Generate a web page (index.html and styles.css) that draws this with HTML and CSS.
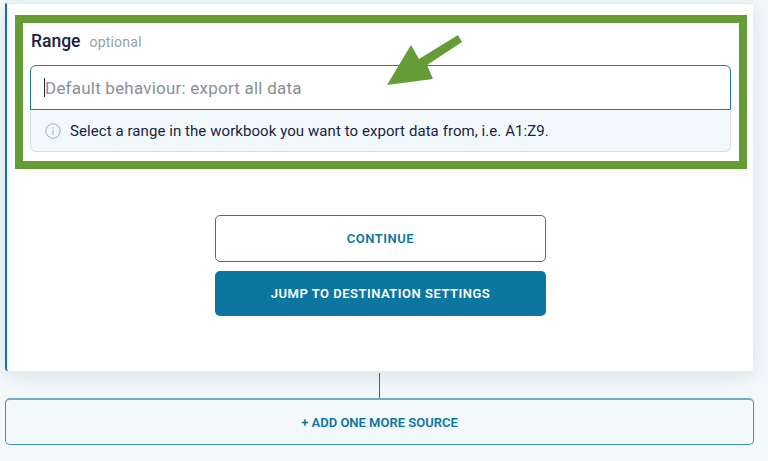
FILE: index.html
```html
<!DOCTYPE html>
<html lang="en">
<head>
	<meta charset="UTF-8">
	<title>Source settings</title>
	<link rel="stylesheet" href="styles.css">
</head>
<body>
<div class="card">
	<div class="highlight">
		<div class="label-row">
			<span class="label">Range</span>
			<span class="optional">optional</span>
		</div>
		<div class="field">
			<div class="input"><i class="caret"></i><span>Default behaviour: export all data</span></div>
			<div class="help">
				<svg class="info" viewBox="0 0 16 16" width="16" height="16">
					<circle cx="8" cy="8" r="7.2" fill="none" stroke="#9db0bc" stroke-width="1"/>
					<rect x="7.5" y="7" width="1.1" height="4.6" fill="#9db0bc"/>
					<rect x="7.5" y="4.4" width="1.1" height="1.3" fill="#9db0bc"/>
				</svg>
				<span>Select a range in the workbook you want to export data from, i.e. A1:Z9.</span>
			</div>
		</div>
		<svg class="arrow" viewBox="0 0 80 54" width="80" height="54">
			<polygon fill="#669c35" points="2,52 26,12 34,26 73,2 77,9 42,32 48,46"/>
		</svg>
	</div>
	<div class="actions">
		<a class="btn btn-outline">CONTINUE</a>
		<a class="btn btn-solid">JUMP TO DESTINATION SETTINGS</a>
	</div>
</div>
<div class="connector"></div>
<a class="add-source">+ ADD ONE MORE SOURCE</a>
</body>
</html>
```

FILE: styles.css
```css
html, body {
    height: 100%;
}

body {
    box-sizing: border-box;
    height: 461px;
    margin: 0;
    padding: 3px 15px 0 5px;
    overflow: hidden;
    font-family: "Roboto", "Liberation Sans", sans-serif;
    color: #1c2340;
    background: #f3f8fb;
}

.card {
    box-sizing: border-box;
    height: 368px;
    padding: 11px 6px 0 8px;
    border-top: 1px solid #e6eaee;
    border-left: 2px solid #0b76a0;
    border-radius: 0 0 3px 3px;
    background: #fff;
    box-shadow: 0 4px 22px rgba(60, 90, 110, .14);
}

.highlight {
    position: relative;
    box-sizing: border-box;
    height: 154px;
    padding: 8px 8px 0 7px;
    border: 8px solid #669c35;
}

.label-row {
    display: flex;
    align-items: baseline;
    gap: 9px;
    height: 34px;
    padding-left: 1px;
}

.label {
    font-size: 17.5px;
    font-weight: 500;
    line-height: 20px;
}

.optional {
    font-size: 14px;
    letter-spacing: .2px;
    color: #8fa3b0;
}

.field {
    border-radius: 6px;
    background: #f1f9fd;
    box-shadow: inset 0 0 0 1px #d2dee6;
}

.input {
    box-sizing: border-box;
    display: flex;
    align-items: center;
    height: 45px;
    padding-left: 13px;
    border: 1px solid #1f7ea6;
    border-radius: 6px 6px 0 0;
    font-size: 17px;
    letter-spacing: .22px;
    color: #8a8f94;
    background: #fff;
}

.caret {
    width: 1px;
    height: 19px;
    background: #1c2340;
}

.help {
    display: flex;
    align-items: center;
    gap: 9px;
    height: 42px;
    padding-left: 15px;
    font-size: 15px;
    letter-spacing: .07px;
}

.info {
    flex: none;
}

.arrow {
    position: absolute;
    top: 10px;
    left: 362px;
}

.actions {
    display: flex;
    flex-direction: column;
    align-items: center;
    gap: 9px;
    padding: 46px 1px 0 0;
}

.btn {
    box-sizing: border-box;
    display: flex;
    align-items: center;
    justify-content: center;
    width: 331px;
    border-radius: 5px;
    font-size: 13px;
    font-weight: 600;
    letter-spacing: .5px;
}

.btn-outline {
    height: 47px;
    border: 1px solid #1a80a8;
    color: #0b76a0;
    background: #fff;
}

.btn-solid {
    height: 45px;
    color: #fff;
    background: #0b76a0;
}

.connector {
    width: 1px;
    height: 25px;
    margin: 2px 0 0 374px;
    background: #0b76a0;
}

.add-source {
    box-sizing: border-box;
    display: flex;
    align-items: center;
    justify-content: center;
    width: 749px;
    height: 47px;
    border: 1px solid #3f93b5;
    border-top: 2px solid #6fb0c8;
    border-radius: 5px;
    font-size: 13px;
    font-weight: 600;
    color: #0b76a0;
}
```
